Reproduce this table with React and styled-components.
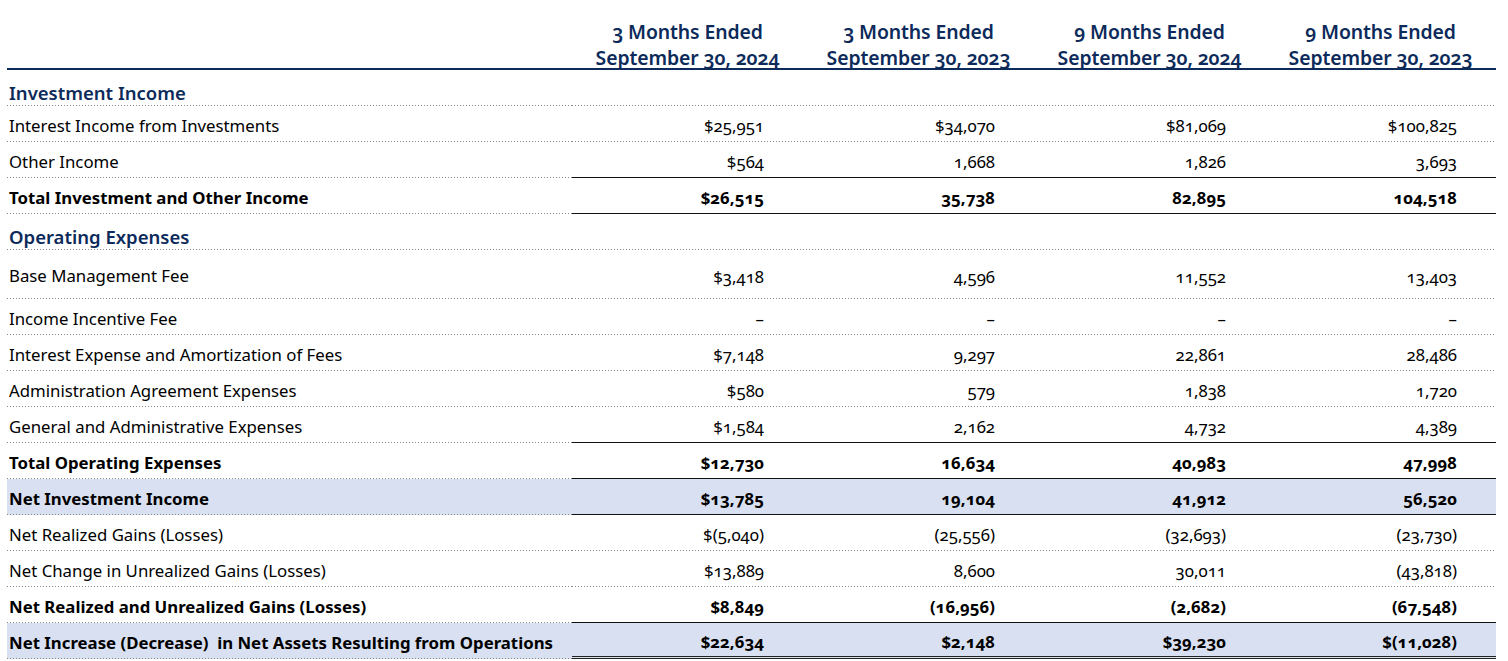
import React from 'react';
import styled, { createGlobalStyle, css } from 'styled-components';

const GlobalStyle = createGlobalStyle`
  html, body {
    margin: 0;
    padding: 0;
    background: #fff;
  }
  body {
    font-family: "Noto Sans", "Open Sans", sans-serif;
    color: #000;
  }
`;

const NAVY = '#0c2a5a';
const dots = 'repeating-linear-gradient(to right, #888 0 1px, transparent 1px 3px)';

const Page = styled.div`
  padding: 0 12px 0 7px;
  width: 1489px;
`;

const Grid = styled.div`
  display: grid;
  grid-template-columns: 565px repeat(4, 231px);
`;

const HeaderRow = styled(Grid)`
  height: 70px;
  box-sizing: border-box;
  border-bottom: 2px solid ${NAVY};
`;

const HeadCell = styled.div`
  display: flex;
  flex-direction: column;
  justify-content: flex-end;
  align-items: center;
  color: ${NAVY};
  font-size: 19.4px;
  font-weight: 600;
  line-height: 26px;
  letter-spacing: -0.1px;
  margin-bottom: -3px;
  font-variant-numeric: oldstyle-nums;
`;

const Row = styled(Grid)`
  height: ${p => p.$tall ? 49 : 36}px;
  background: ${p => p.$shade ? '#d9e0f1' : 'transparent'};
`;

const lineStyle = ({ $line }) => {
  if ($line === 'solid') return css`border-bottom: 1px solid #111;`;
  if ($line === 'double') return css`border-bottom: 3px double #222;`;
  return css`
    background-image: ${dots};
    background-size: 100% 1px;
    background-position: left bottom;
    background-repeat: no-repeat;
  `;
};

const Label = styled.div`
  display: flex;
  align-items: center;
  padding: ${p => p.$section ? '9px' : '2px'} 0 0 2px;
  box-sizing: border-box;
  font-size: ${p => p.$section ? '18.5px' : '16.8px'};
  font-weight: ${p => p.$section ? 600 : p.$bold ? 700 : 400};
  color: ${p => p.$section ? NAVY : '#000'};
  white-space: pre;
  background-image: ${dots};
  background-size: 100% 1px;
  background-position: left bottom;
  background-repeat: no-repeat;
`;

const Num = styled.div`
  display: flex;
  align-items: center;
  justify-content: flex-end;
  padding: 3px 39px 0 0;
  box-sizing: border-box;
  font-size: 16.8px;
  font-weight: ${p => p.$bold ? 700 : 400};
  font-variant-numeric: oldstyle-nums;
  ${lineStyle}
`;

const columns = [
  ['3 Months Ended', 'September 30, 2024'],
  ['3 Months Ended', 'September 30, 2023'],
  ['9 Months Ended', 'September 30, 2024'],
  ['9 Months Ended', 'September 30, 2023'],
];

const rows = [
  { label: 'Investment Income', section: true },
  { label: 'Interest Income from Investments', values: ['$25,951', '$34,070', '$81,069', '$100,825'] },
  { label: 'Other Income', values: ['$564', '1,668', '1,826', '3,693'], line: 'solid' },
  { label: 'Total Investment and Other Income', values: ['$26,515', '35,738', '82,895', '104,518'], bold: true, line: 'solid' },
  { label: 'Operating Expenses', section: true },
  { label: 'Base Management Fee', values: ['$3,418', '4,596', '11,552', '13,403'], tall: true },
  { label: 'Income Incentive Fee', values: ['–', '–', '–', '–'] },
  { label: 'Interest Expense and Amortization of Fees', values: ['$7,148', '9,297', '22,861', '28,486'] },
  { label: 'Administration Agreement Expenses', values: ['$580', '579', '1,838', '1,720'] },
  { label: 'General and Administrative Expenses', values: ['$1,584', '2,162', '4,732', '4,389'], line: 'solid' },
  { label: 'Total Operating Expenses', values: ['$12,730', '16,634', '40,983', '47,998'], bold: true, line: 'solid' },
  { label: 'Net Investment Income', values: ['$13,785', '19,104', '41,912', '56,520'], bold: true, shade: true, line: 'solid' },
  { label: 'Net Realized Gains (Losses)', values: ['$(5,040)', '(25,556)', '(32,693)', '(23,730)'] },
  { label: 'Net Change in Unrealized Gains (Losses)', values: ['$13,889', '8,600', '30,011', '(43,818)'] },
  { label: 'Net Realized and Unrealized Gains (Losses)', values: ['$8,849', '(16,956)', '(2,682)', '(67,548)'], bold: true, line: 'solid' },
  { label: 'Net Increase (Decrease)  in Net Assets Resulting from Operations', values: ['$22,634', '$2,148', '$39,230', '$(11,028)'], bold: true, shade: true, line: 'double' },
];

export default function App() {
  return (
    <>
      <GlobalStyle />
      <Page>
        <HeaderRow>
          <div />
          {columns.map((c, i) => (
            <HeadCell key={i}>
              <span>{c[0]}</span>
              <span>{c[1]}</span>
            </HeadCell>
          ))}
        </HeaderRow>
        {rows.map((r, i) => (
          <Row key={i} $tall={r.tall} $shade={r.shade}>
            <Label $section={r.section} $bold={r.bold}>{r.label}</Label>
            {(r.values || ['', '', '', '']).map((v, j) => (
              <Num key={j} $bold={r.bold} $line={r.line}>{v}</Num>
            ))}
          </Row>
        ))}
      </Page>
    </>
  );
}
